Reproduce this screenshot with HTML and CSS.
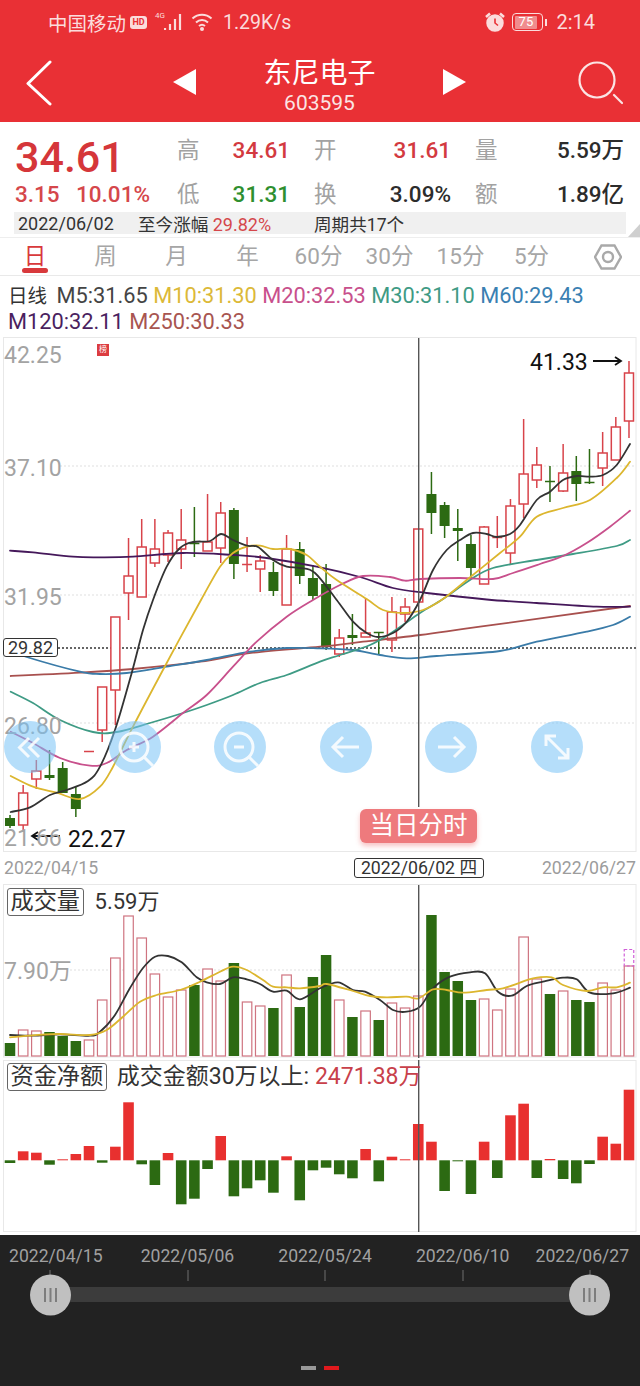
FILE: index.html
```html
<!DOCTYPE html>
<html lang="zh-CN">
<head>
<meta charset="utf-8">
<title>东尼电子 603595</title>
<link rel="stylesheet" href="styles.css">
</head>
<body>
<div class="app">
  <header class="header">
    <div class="status">
      <span class="carrier">中国移动</span>
      <span class="hd">HD</span>
      <span class="net">4G</span>
      <svg class="signal" width="20" height="18" viewBox="0 0 20 18"><path d="M1 15v2M6 11v6M11 6v11M16 1v16"/></svg>
      <svg class="wifi" width="22" height="20" viewBox="0 0 22 20"><path d="M1.500 6.500c5.500-5 13.500-5 19 0M5 10.500c3.500-3.200 8.500-3.200 12 0M8 14c1.800-1.500 4.200-1.500 6 0"/><circle cx="11" cy="17" r="2"/></svg>
      <span class="speed">1.29K/s</span>
      <span class="status-gap"></span>
      <svg class="alarm" width="20" height="20" viewBox="0 0 20 20"><circle cx="10" cy="11" r="7.500"/><path class="hands" d="M10 6.500v4.500l3 2.500"/><path class="bell" d="M1 5l4-3.500M19 5l-4-3.500"/></svg>
      <span class="battery"><span class="battery-level">75</span></span>
      <span class="battery-nub"></span>
      <span class="clock">2:14</span>
    </div>
    <nav class="nav">
      <svg class="back" width="30" height="46" viewBox="0 0 30 46"><path d="M25 2L3 23.500 25 44"/></svg>
      <span class="tri tri-left"></span>
      <div class="title">
        <div class="name">东尼电子</div>
        <div class="code">603595</div>
      </div>
      <span class="tri tri-right"></span>
      <svg class="search" width="46" height="46" viewBox="0 0 46 46"><circle cx="20" cy="20" r="17.500"/><path d="M37 35l8 8"/></svg>
    </nav>
  </header>

  <section class="quote">
    <div class="quote-grid">
      <div class="price">34.61</div>
      <div class="pair"><span class="lab">高</span><span class="up">34.61</span></div>
      <div class="pair"><span class="lab">开</span><span class="up">31.61</span></div>
      <div class="pair"><span class="lab">量</span><span class="dark">5.59万</span></div>
      <div class="change"><span>3.15</span><span>10.01%</span></div>
      <div class="pair"><span class="lab">低</span><span class="down">31.31</span></div>
      <div class="pair"><span class="lab">换</span><span class="dark">3.09%</span></div>
      <div class="pair"><span class="lab">额</span><span class="dark">1.89亿</span></div>
    </div>
    <div class="strip">
      <span class="strip-date">2022/06/02</span>
      <span class="strip-gain">至今涨幅 <em>29.82%</em></span>
      <span class="strip-count">周期共17个</span>
    </div>
    <span class="corner"></span>
  </section>

  <div class="tabs">
    <span class="tab active">日</span>
    <span class="tab">周</span>
    <span class="tab">月</span>
    <span class="tab">年</span>
    <span class="tab">60分</span>
    <span class="tab">30分</span>
    <span class="tab">15分</span>
    <span class="tab">5分</span>
    <svg class="gear" width="28" height="26" viewBox="0 0 28 26"><path d="M7.500 1.500h13L27 13l-6.500 11.500h-13L1 13z"/><circle cx="14" cy="13" r="5"/></svg>
  </div>

  <div class="legend">
    <div><span class="legend-name">日线</span> <span class="c5">M5:31.65</span> <span class="c10">M10:31.30</span> <span class="c20">M20:32.53</span> <span class="c30">M30:31.10</span> <span class="c60">M60:29.43</span></div>
    <div><span class="c120">M120:32.11</span> <span class="c250">M250:30.33</span></div>
  </div>

  <section class="panel panel-k">
    <svg id="kline" class="plot" width="640" height="515" viewBox="0 337 640 515"></svg>
    <span class="axis a1">42.25</span>
    <span class="axis a2">37.10</span>
    <span class="axis a3">31.95</span>
    <span class="axis a4">26.80</span>
    <span class="axis a5">21.66</span>
    <span class="bang">榜</span>
    <span class="mark mark-high">41.33</span>
    <span class="mark mark-low">22.27</span>
    <span class="cross-price">29.82</span>
    <div class="tools">
      <span class="tool"><svg width="52" height="52" viewBox="0 0 52 52"><path d="M25 17l-9.500 9.500L25 36M35 17l-9.500 9.500L35 36"/></svg></span>
      <span class="tool"><svg width="52" height="52" viewBox="0 0 52 52"><circle cx="25" cy="26" r="14"/><path d="M35 36l9 9M25 21v10M20 26h10"/></svg></span>
      <span class="tool"><svg width="52" height="52" viewBox="0 0 52 52"><circle cx="25" cy="26" r="14"/><path d="M35 36l9 9M20 26h10"/></svg></span>
      <span class="tool"><svg width="52" height="52" viewBox="0 0 52 52"><path d="M13 26h26M23 16L13 26l10 10"/></svg></span>
      <span class="tool"><svg width="52" height="52" viewBox="0 0 52 52"><path d="M13 26h26M29 16l10 10-10 10"/></svg></span>
      <span class="tool"><svg width="52" height="52" viewBox="0 0 52 52"><path d="M15 15l22 22M15 25V15h10M37 27v10H27"/></svg></span>
    </div>
    <span class="intraday">当日分时</span>
  </section>

  <div class="dates">
    <span>2022/04/15</span>
    <span class="date-now">2022/06/02 四</span>
    <span>2022/06/27</span>
  </div>

  <section class="panel panel-vol">
    <svg id="volume" class="plot" width="640" height="174" viewBox="0 884 640 174"></svg>
    <div class="panel-head">
      <span class="boxed">成交量</span>
      <span class="head-val vol-val">5.59万</span>
    </div>
    <span class="axis a-vol">7.90万</span>
  </section>

  <section class="panel panel-fund">
    <svg id="funds" class="plot" width="640" height="172" viewBox="0 1060 640 172"></svg>
    <div class="panel-head">
      <span class="boxed">资金净额</span>
      <span class="head-val">成交金额30万以上: <em>2471.38万</em></span>
    </div>
  </section>

  <footer class="range">
    <div class="range-dates">
      <span class="range-first">2022/04/15</span>
      <span>2022/05/06</span>
      <span>2022/05/24</span>
      <span>2022/06/10</span>
      <span class="range-last">2022/06/27</span>
    </div>
    <svg class="slider" width="640" height="56" viewBox="0 1268 640 56">
      <path class="slider-tick" d="M50 1269v11M188 1269v11M325 1269v11M463 1269v11M590 1269v11"/>
      <rect class="slider-track" x="50" y="1286" width="540" height="15"/>
      <circle class="slider-knob" cx="50.500" cy="1294" r="20.500"/>
      <circle class="slider-knob" cx="589.500" cy="1294" r="20.500"/>
      <path class="slider-grip" d="M45 1287v14M50.500 1287v14M56 1287v14M584 1287v14M589.500 1287v14M595 1287v14"/>
    </svg>
    <div class="pager"><span class="dot"></span><span class="dot dot-on"></span></div>
  </footer>
</div>
<script src="chart.js"></script>
</body>
</html>
```
FILE: styles.css
```css
* { box-sizing: border-box; }
html, body { margin: 0; padding: 0; background: #fff; }
body { font-family: Roboto, "Noto Sans CJK SC", sans-serif; }
em { font-style: normal; }
.app { width: 640px; height: 1386px; overflow: hidden; background: #fff; }

.header { height: 122px; background: #e93035; color: #fff; }
.status { height: 44px; padding: 0 0 0 48px; display: flex; align-items: center; color: #fbdcdc; font-size: 19px; }
.carrier { width: 82px; font-size: 19.500px; }
.hd { width: 17px; height: 13px; background: #fbdcdc; color: #e93035; border-radius: 3px; font-size: 9px; line-height: 13px; text-align: center; font-weight: 700; }
.net { width: 9px; margin: -13px 0 0 8px; font-size: 8px; }
.signal { stroke: #fbdcdc; stroke-width: 2.200; fill: none; }
.wifi { margin-left: 7px; stroke: #fbdcdc; stroke-width: 2; fill: none; }
.wifi circle { fill: #fbdcdc; stroke: none; }
.speed { margin-left: 10px; font-size: 19.500px; }
.status-gap { flex: 1; }
.alarm { stroke: #fbdcdc; stroke-width: 2.500; fill: #fbdcdc; }
.alarm .hands { stroke: #e93035; stroke-width: 1.600; fill: none; }
.battery { width: 31px; height: 18px; margin-left: 7px; border: 1.500px solid #fbdcdc; border-radius: 4px; padding: 1.500px; display: flex; }
.battery-level { width: 22px; background: #f08c8e; color: #fff; font-size: 13px; line-height: 12px; text-align: center; border-radius: 1px; }
.battery-nub { width: 2px; height: 7px; margin-left: 2px; background: #fbdcdc; }
.clock { margin: 0 45px 0 9px; font-size: 20px; }

.nav { height: 78px; display: flex; align-items: center; position: relative; }
.back { margin-left: 25px; stroke: #fff; stroke-width: 3; fill: none; stroke-linecap: round; stroke-linejoin: round; }
.tri { width: 0; height: 0; border-style: solid; margin-bottom: 2px; }
.tri-left { margin-left: 118px; border-width: 13.500px 23px 13.500px 0; border-color: transparent #fff transparent transparent; }
.tri-right { border-width: 13.500px 0 13.500px 23px; border-color: transparent transparent transparent #fff; }
.title { width: 247px; padding-top: 5px; text-align: center; }
.name { font-size: 28px; line-height: 34px; margin-top: 1px; }
.code { font-size: 21px; line-height: 25px; color: #fbe4e4; }
.search { margin-left: 110.500px; stroke: #fbe4e4; stroke-width: 2.200; fill: none; stroke-linecap: round; }

.quote { height: 115px; padding-top: 7px; position: relative; border-bottom: 1px solid #eeeeee; margin-top: 1px; }
.quote-grid { display: grid; grid-template-columns: 139px 113px 137px 149px; grid-template-rows: 40px 36px; column-gap: 24px; row-gap: 6px; padding-left: 14px; font-size: 22.500px; font-weight: 500; }
.price { height: 40px; padding: 14px 0 0 1px; line-height: 26px; font-size: 43px; font-weight: 500; color: #d5363a; }
.pair { display: flex; justify-content: space-between; align-items: center; line-height: 36px; }
.lab { font-size: 22.500px; color: #a2a2a2; font-weight: 400; }
.up { color: #d33a40; }
.down { color: #2f8f2f; }
.dark { color: #2c2c2c; }
.change { display: flex; justify-content: space-between; align-items: center; padding: 0 3px 0 1px; color: #d5474b; }
.strip { height: 22px; margin: 0 14px; background: #f0f0f0; display: flex; align-items: center; font-size: 17.600px; color: #333; }
.strip-date { margin-left: 4px; width: 120px; font-size: 18px; }
.strip-gain { width: 176px; }
.strip-gain em { color: #d5474b; font-size: 18px; }
.corner { position: absolute; right: 0; bottom: 0; width: 0; height: 0; border-style: solid; border-width: 0 0 13px 12px; border-color: transparent transparent #cfcfcf transparent; }

.tabs { height: 38px; position: relative; display: grid; grid-template-columns: 70px repeat(7, 71px) 28px; justify-content: start; border-bottom: 1px solid #e9e9e9; align-items: center; font-size: 22.500px; color: #a6a6a6; }
.tab { text-align: center; line-height: 36px; margin-bottom: 2px; }
.active { color: #d8393c; position: relative; }
.active::after { content: ""; position: absolute; left: 22px; top: 30px; width: 26px; height: 5px; border-radius: 3px; background: #d8393c; }
.gear { margin-left: 27px; stroke: #a9a9a9; stroke-width: 2.400; fill: none; }

.legend { height: 61px; padding: 8px 0 0 8px; font-size: 21.800px; line-height: 24.800px; color: #333; white-space: nowrap; }
.legend-name { font-size: 19.500px; margin-right: 4px; }
.c5 { color: #444; }
.c10 { color: #dcb938; }
.c20 { color: #c8508c; }
.c30 { color: #3f9b85; }
.c60 { color: #3a80b2; }
.c120 { color: #4b1f5f; }
.c250 { color: #a85550; }

.panel { position: relative; }
.plot { display: block; }
.panel-k { height: 515px; }
.panel-vol { height: 174px; }
.panel-fund { height: 172px; margin-top: 2px; }
.axis { position: absolute; left: 4px; font-size: 23px; line-height: 26px; color: #a3a3a3; }
.a1 { top: 6px; }
.a2 { top: 119px; }
.a3 { top: 248px; }
.a4 { top: 377px; }
.a5 { top: 489px; }
.a-vol { top: 75px; color: #a3a3a3; }
.bang { position: absolute; left: 97px; top: 7px; width: 12px; height: 12px; background: #dc3c40; color: #fff; font-size: 8px; line-height: 12px; text-align: center; }
.mark { position: absolute; font-size: 23px; line-height: 26px; color: #111; }
.mark-high { left: 530px; top: 13px; }
.mark-low { left: 68px; top: 490px; }
.cross-price { position: absolute; left: 3px; top: 301px; width: 55px; height: 19px; border: 1px solid #333; border-radius: 3px; background: #fff; font-size: 18px; line-height: 17px; text-align: center; color: #333; }
.tools { position: absolute; left: 3.700px; top: 384px; display: flex; gap: 53.400px; }
.tool { width: 52px; height: 52px; border-radius: 50%; background: rgba(120, 195, 245, .55); }
.tool svg { display: block; stroke: #fff; stroke-width: 3; fill: none; opacity: .85; }
.intraday { position: absolute; left: 360px; top: 472px; width: 117px; height: 34px; border-radius: 6px; background: #ee7a7d; box-shadow: 0 3px 5px rgba(238, 122, 125, .45); color: #fff; font-size: 24.500px; line-height: 34px; text-align: center; }

.dates { height: 32px; padding: 0 4px; display: flex; justify-content: space-between; align-items: center; font-size: 17.700px; color: #9c9c9c; position: relative; }
.date-now { position: absolute; left: 354px; top: 6px; width: 130px; height: 20px; border: 1px solid #333; border-radius: 3px; color: #333; line-height: 18px; text-align: center; }

.panel-head { position: absolute; left: 7px; top: 4px; display: flex; align-items: flex-start; font-size: 23px; line-height: 27px; color: #333; }
.panel-fund .panel-head { top: 3px; }
.boxed { height: 28px; padding: 0 2.500px; border: 1px solid #666; border-radius: 3px; background: #fff; font-size: 23.200px; line-height: 25px; }
.head-val { margin-left: 10px; }
.vol-val { margin-left: 11px; font-size: 22px; }
.head-val em { color: #c8404a; }

.range { height: 151px; margin-top: 3px; background: #222; position: relative; }
.range-dates { height: 34px; padding: 8px 9px 0; display: flex; gap: 44px; font-size: 17.600px; line-height: 26px; color: #a0a0a0; }
.range-first { margin-right: -6px; }
.range-last { margin-left: -18px; }
.slider { display: block; }
.slider-tick { stroke: #555; stroke-width: 1.500; }
.slider-track { fill: #3c3c3c; }
.slider-knob { fill: #c0c0c0; }
.slider-grip { stroke: #7d7d7d; stroke-width: 2; }
.pager { margin-top: 41px; display: flex; justify-content: center; gap: 8.500px; }
.dot { width: 14.500px; height: 4px; background: #999; }
.dot-on { background: #e0191d; }

.frame { fill: none; stroke: #e8e8e8; stroke-width: 1; }
.grid { stroke: #dfdfdf; stroke-width: 1; stroke-dasharray: 2 2; }
.dots { stroke: #333; stroke-width: 1.500; stroke-dasharray: 2 2; }
.cross { stroke: #555; stroke-width: 1.400; }
.wick-up { stroke: #d8434a; stroke-width: 1.500; }
.wick-down { stroke: #2c6a12; stroke-width: 1.500; }
.body-up { fill: #fff; stroke: #d8434a; stroke-width: 1.500; }
.body-down { fill: #2c6a12; }
.vol-up { fill: #fff; stroke: #cf7480; stroke-width: 1.200; }
.vol-down { fill: #2c6a12; }
.vol-ghost { fill: none; stroke: #d060d8; stroke-width: 1.200; stroke-dasharray: 3 2; }
.fund-up { fill: #e8302f; }
.fund-down { fill: #2c6a12; }
.ma { fill: none; stroke-width: 1.800; stroke-linejoin: round; stroke-linecap: round; }
.ma-5 { stroke: #333; }
.ma-10 { stroke: #dcb62e; }
.ma-20 { stroke: #c8508c; }
.ma-30 { stroke: #3f9b85; }
.ma-60 { stroke: #3a7ba8; }
.ma-120 { stroke: #45185a; }
.ma-250 { stroke: #a8504e; }
.arrow { fill: none; stroke: #111; stroke-width: 1.800; }
```
FILE: chart.js
```js
var NS = "http://www.w3.org/2000/svg";
function xAt(i) { return 10 + 13.17 * i; }
function add(svg, tag, cls, attrs) {
  var el = document.createElementNS(NS, tag);
  if (cls) el.setAttribute("class", cls);
  for (var k in attrs) el.setAttribute(k, attrs[k]);
  svg.appendChild(el);
  return el;
}
function rect(svg, cls, x, y0, y1, w) {
  return add(svg, "rect", cls, { x: x - w / 2, y: Math.min(y0, y1), width: w, height: Math.abs(y1 - y0) });
}
function line(svg, cls, x1, y1, x2, y2) {
  return add(svg, "line", cls, { x1: x1, y1: y1, x2: x2, y2: y2 });
}
function smooth(p) {
  var d = "M" + p[0][0] + " " + p[0][1];
  for (var i = 0; i < p.length - 1; i++) {
    var a = p[Math.max(i - 1, 0)], b = p[i], c = p[i + 1], e = p[Math.min(i + 2, p.length - 1)];
    d += "C" + (b[0] + (c[0] - a[0]) / 6).toFixed(1) + " " + (b[1] + (c[1] - a[1]) / 6).toFixed(1) + " " +
      (c[0] - (e[0] - b[0]) / 6).toFixed(1) + " " + (c[1] - (e[1] - b[1]) / 6).toFixed(1) + " " + c[0] + " " + c[1];
  }
  return d;
}
function ma(svg, cls, p) { add(svg, "path", "ma " + cls, { d: smooth(p) }); }

// high, body top, body bottom, low, direction (1 rising, 0 falling)
var candles = [
  [815,818,826,828,0],[785,793,825,830,1],[760,771,779,789,1],[750,775,778,780,0],
  [762,768,793,793,0],[786,794,809,817,0],[751,751,751,751,1],[687,687,730,742,1],
  [617,617,690,725,1],[538,576,593,620,1],[519,547,597,597,1],[519,549,563,567,1],
  [530,533,555,562,1],[509,540,549,569,1],[507,543,545,557,0],[494,542,551,551,1],
  [502,513,548,563,1],[508,510,564,579,0],[537,564,566,572,1],[555,561,569,592,1],
  [562,572,591,596,0],[535,549,605,605,1],[542,549,576,584,0],[565,578,596,600,0],
  [564,584,647,650,0],[629,638,654,657,1],[614,635,638,645,0],[598,633,637,637,1],
  [632,632,634,655,0],[597,612,640,652,1],[598,607,614,622,1],[529,529,602,602,1],
  [472,494,513,534,0],[502,505,526,538,0],[509,528,531,561,0],[535,544,568,579,0],
  [526,527,584,584,1],[516,537,539,548,1],[499,506,553,565,1],[419,474,504,518,1],
  [447,465,480,488,1],[466,481,483,502,0],[444,473,491,492,1],[456,471,484,501,0],
  [449,482,484,484,0],[432,453,468,486,1],[417,427,460,460,1],[361,373,421,438,1]
];
var volumes = [
  [1043,0],[1030,1],[1031,1],[1032,0],[1036,0],[1041,0],[1040,1],[1000,1],
  [958,1],[916,1],[938,1],[974,1],[997,1],[990,1],[985,0],[969,1],
  [981,1],[963,0],[1002,1],[1006,1],[1008,0],[975,1],[1007,0],[977,0],
  [955,0],[1000,1],[1017,0],[1011,1],[1020,0],[1003,1],[1008,1],[996,1],
  [915,0],[972,0],[981,0],[1000,0],[999,1],[1010,1],[989,1],[937,1],
  [979,1],[994,0],[991,1],[1000,0],[1002,0],[983,1],[990,1],[966,1]
];
// pixel end of each money-flow bar; above the base line is inflow
var funds = [1163,1151.3,1152.7,1164.7,1159.3,1154,1146,1162.7,1146.7,1102.3,1164.3,1185,
  1153,1204.3,1198.7,1169,1136,1196.3,1188.3,1180.3,1192.7,1156.3,1200.3,1170.3,
  1167.7,1174.3,1178.3,1149,1181.3,1156.7,1159.8,1124,1141.7,1191,1161,1194,
  1141.7,1178,1115.3,1103.7,1178,1159,1179,1183.3,1164,1136.7,1143.7,1089.7];

var k = document.getElementById("kline");
add(k, "rect", "frame", { x: 3.5, y: 337.5, width: 632.5, height: 514 });
[466, 595, 723].forEach(function (y) { line(k, "grid", 60, y, 636, y); });
line(k, "dots", 58, 648, 636, 648);
candles.forEach(function (c, i) {
  var x = xAt(i), up = c[4] === 1;
  line(k, up ? "wick-up" : "wick-down", x, c[0], x, c[3]);
  if (c[2] - c[1] < 3) line(k, up ? "wick-up" : "wick-down", x - 5, c[1] + 0.5, x + 5, c[1] + 0.5);
  else rect(k, up ? "body-up" : "body-down", x, c[1], c[2], up ? 9 : 10);
});
ma(k, "ma-250", [[10.7,676],[80,672.7],[133,669],[200,661.7],[253,652.7],[320,646.7],[363,641.7],[420,635],[480,626.7],[630,606]]);
ma(k, "ma-120", [[10,550.7],[33,552.3],[73,556.7],[100,557.3],[133,556.7],[183,553],[233,555],[266.7,558],[316.7,566.7],[360,577],[393,588],[426.7,593],[486.7,599.5],[536.7,603],[596.7,606.7],[630,606.7]]);
ma(k, "ma-60", [[10,650],[26.7,657],[80,671.7],[100,674],[126.7,673],[166.7,666.7],[206.7,660],[250,651.7],[286.7,648],[320,648.3],[353,650],[380,655],[406.7,658.3],[436.7,656],[500,651],[536.7,641.7],[586.7,631.7],[613,625],[630,616.7]]);
ma(k, "ma-30", [[10.7,691.7],[33,703],[60,720],[93,732],[116.7,732],[150,723],[183,713],[206.7,705],[233,695],[260,683],[286.7,675],[320,661.7],[340,655],[370,645],[393,631.7],[420,613],[443,599],[470,580],[493,568],[536.7,560],[573,554],[616.7,546],[630,540]]);
ma(k, "ma-20", [[10.7,731.7],[33,743],[60,758],[90,765.7],[106.7,763],[126.7,750],[153,736.7],[183,713],[206.7,695],[233,666.7],[256.7,641.7],[286.7,616.7],[313,600],[340,585],[363,576],[390,577],[405,580.7],[420,579],[460,578],[493,579],[513,573],[540,564],[563,556],[586.7,543],[610,526.7],[630,510.7]]);
ma(k, "ma-10", [[10.7,776],[33,786.7],[56.7,792.7],[80,799],[100,786.7],[113,766.7],[133,726.7],[166.7,663],[201,600],[220,566.7],[233,553],[246.7,546.7],[260,545.7],[273,549],[290,549],[306.7,555],[320,566.7],[336.7,580],[366.7,599],[383,610],[403,613],[423,610],[443,599],[466.7,580],[500,553],[520,536.7],[536.7,516.7],[563,508],[590,500],[616.7,478],[630,461.7]]);
ma(k, "ma-5", [[10.7,812],[30,807.3],[50,795],[66.7,790],[88,781],[100,766.7],[115,730],[131.7,673],[143,630],[153,600],[166.7,566.7],[180,548],[193,542],[210,541],[221,534],[233,540],[247,545.7],[258,547],[273,560],[286.7,566.7],[300,568],[315,573],[336.7,600],[353,621.7],[366.7,633],[378,637],[393,633],[406.7,621.7],[420,600],[433,570],[446.7,550],[460,540],[473,533],[486.7,534],[496.7,537],[510,534],[520,525],[536.7,500],[550,491.7],[563,480],[576.7,476],[590,476.7],[603,475],[616.7,465],[630,444]]);
line(k, "cross", 418.7, 338, 418.7, 807);
add(k, "path", "arrow", { d: "M593 361h28M615 357l6 4-6 4" });
add(k, "path", "arrow", { d: "M60 836H32M38 832l-6 4 6 4" });

var v = document.getElementById("volume");
add(v, "rect", "frame", { x: 3.5, y: 884.5, width: 632.5, height: 172.5 });
line(v, "grid", 70, 970, 636, 970);
volumes.forEach(function (b, i) {
  rect(v, b[1] ? "vol-up" : "vol-down", xAt(i), b[0], 1056, b[1] ? 9.5 : 10.5);
});
rect(v, "vol-ghost", xAt(47), 949.5, 966, 9.5);
add(v, "path", "ma ma-5", { d: smooth([[10,1035],[33,1035.7],[60,1034.3],[90,1035.7],[100,1031.7],[115,1015],[130,988],[143,968],[155,956.7],[168,956],[181.7,962.3],[196.7,977.3],[206.7,982.3],[220,984],[233,977.3],[246.7,979.3],[260,984],[273,991.7],[286.7,990.7],[300,999.3],[320,988.3],[338,982.3],[353,990],[365,991.7],[380,1000],[393,1010],[406.7,1011.7],[420,1006.7],[433,988.3],[450,976.7],[470,972.3],[485,973.3],[498,991.7],[511.7,995.7],[526.7,986],[543,981.7],[563,977.7],[576.7,979.3],[590,992.7],[613,993.3],[630,987.7]]) });
add(v, "path", "ma ma-10", { d: smooth([[10,1037.3],[33,1035.3],[60,1034],[90,1035],[106.7,1030],[123,1016.7],[140,1001.7],[156.7,995],[180,990],[200,981.7],[220,971.7],[233,966.7],[246.7,970],[263,980],[273,986.7],[286.7,987.3],[300,988.3],[320,986],[326.7,984],[353,991],[370,996],[386.7,997.3],[406.7,996.7],[418.7,998.3],[433,989.3],[446.7,990],[463,992.7],[486.7,990],[503,988.3],[520,982.7],[533,978.3],[551.7,977.3],[563,985],[586.7,991],[603,987.3],[616.7,987.3],[630,982.7]]) });
line(v, "cross", 418.7, 885, 418.7, 1058);

var f = document.getElementById("funds");
add(f, "rect", "frame", { x: 3.5, y: 1060.5, width: 632.5, height: 171 });
funds.forEach(function (y, i) {
  var base = 1160.3, up = y < base;
  var end = Math.abs(y - base) < 1 ? (up ? base - 1 : base + 1) : y;
  rect(f, up ? "fund-up" : "fund-down", xAt(i), end, base, 10.6);
});
line(f, "cross", 418.7, 1060, 418.7, 1232);
```
